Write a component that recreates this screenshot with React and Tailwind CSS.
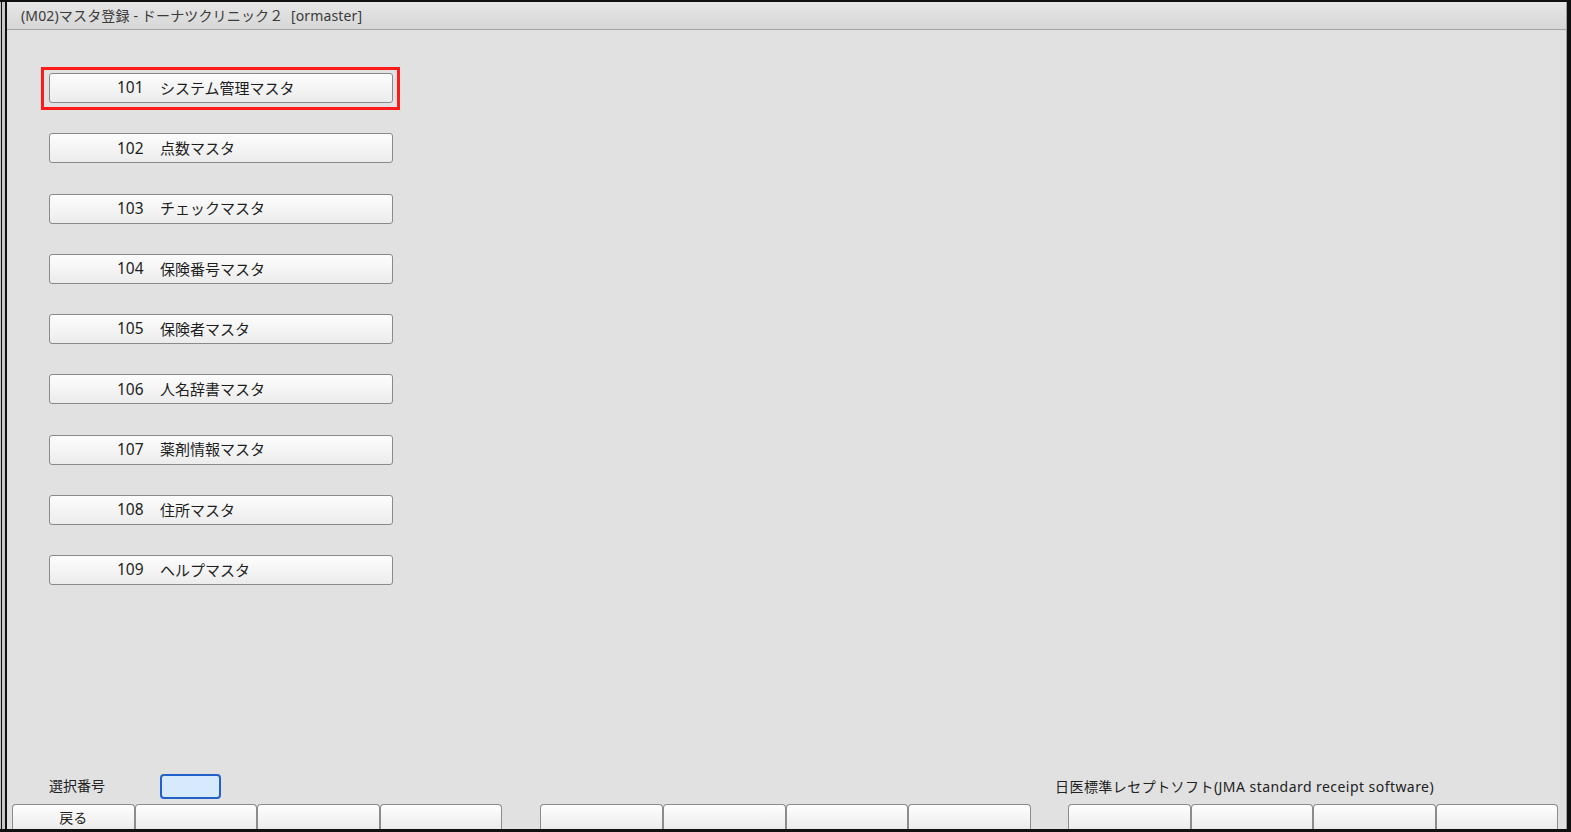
import React from "react";

const items = [
  ["101", "システム管理マスタ"],
  ["102", "点数マスタ"],
  ["103", "チェックマスタ"],
  ["104", "保険番号マスタ"],
  ["105", "保険者マスタ"],
  ["106", "人名辞書マスタ"],
  ["107", "薬剤情報マスタ"],
  ["108", "住所マスタ"],
  ["109", "ヘルプマスタ"],
];

const font = { fontFamily: '"Noto Sans", "Noto Sans CJK JP", sans-serif' };

function FKey({ label, w }) {
  return (
    <div
      className={`${w} shrink-0 h-[25px] border border-b-0 border-[#8c8c8c] rounded-t-[4px] bg-gradient-to-b from-[#ffffff] to-[#ebebeb] flex items-center justify-center text-[14px] text-[#222] pt-[1px]`}
    >
      {label}
    </div>
  );
}

export default function App() {
  return (
    <div className="w-[1571px] h-[832px] bg-[#101010] pt-[2px] pb-[3px] pr-[4px] flex" style={font}>
      <div className="w-[1px] shrink-0 bg-[#c4c4c4]" />
      <div className="w-[1px] shrink-0 bg-[#101010]" />
      <div className="w-[3px] shrink-0 bg-[#c8c8c8]" />
      <div className="w-[2px] shrink-0 bg-[#101010]" />
      <div className="flex-1 flex flex-col bg-[#e1e1e1] border-r border-[#a0a0a0]">
        <div className="h-[28px] shrink-0 bg-gradient-to-b from-[#e6e6e6] to-[#d7d7d7] border-b border-[#a6a6a6] flex items-center pl-[14px] text-[14px] tracking-[0.15px] text-[#3a3a3a]">
          (M02)マスタ登録 - ドーナツクリニック２&nbsp;&nbsp;[ormaster]
        </div>
        <div className="flex-1 pl-[42px] pt-[43px]">
          <div className="flex flex-col gap-[30.25px] w-[344px]">
            {items.map(([n, name], i) => (
              <div key={n} className="relative">
                {i === 0 && (
                  <div className="absolute left-[-8px] top-[-6px] w-[359px] h-[43px] border-[3px] border-[#ff1a1a] pointer-events-none" />
                )}
                <div className="h-[30px] w-[344px] border border-[#8a8a8a] rounded-[3px] bg-gradient-to-b from-[#fdfdfd] to-[#ececec] flex items-center pl-[67px] text-[15px] text-[#1e1e1e]">
                  <span className="w-[43px] text-[15.5px]">{n}</span>
                  <span>{name}</span>
                </div>
              </div>
            ))}
          </div>
        </div>
        <div className="h-[32px] shrink-0 flex items-start pl-[42px] text-[14px] text-[#222]">
          <span className="w-[111px] shrink-0 mt-[4px] leading-[20px]">選択番号</span>
          <div className="w-[61px] shrink-0 h-[25px] mt-[2px] rounded-[4px] border-2 border-[#2360c9] bg-[#d6e9fd]" />
          <span className="ml-[834px] mt-[5px] leading-[20px] whitespace-nowrap tracking-[0.45px]">日医標準レセプトソフト(JMA standard receipt software)</span>
        </div>
        <div className="h-[25px] shrink-0 flex pl-[5px]">
          <FKey label="戻る" w="w-[122.5px]" />
          <FKey label="" w="w-[122.5px]" />
          <FKey label="" w="w-[122.5px]" />
          <FKey label="" w="w-[122.5px]" />
          <div className="w-[38px] shrink-0" />
          <FKey label="" w="w-[122.75px]" />
          <FKey label="" w="w-[122.75px]" />
          <FKey label="" w="w-[122.75px]" />
          <FKey label="" w="w-[122.75px]" />
          <div className="w-[37px] shrink-0" />
          <FKey label="" w="w-[122.5px]" />
          <FKey label="" w="w-[122.5px]" />
          <FKey label="" w="w-[122.5px]" />
          <FKey label="" w="w-[122.5px]" />
        </div>
      </div>
    </div>
  );
}
